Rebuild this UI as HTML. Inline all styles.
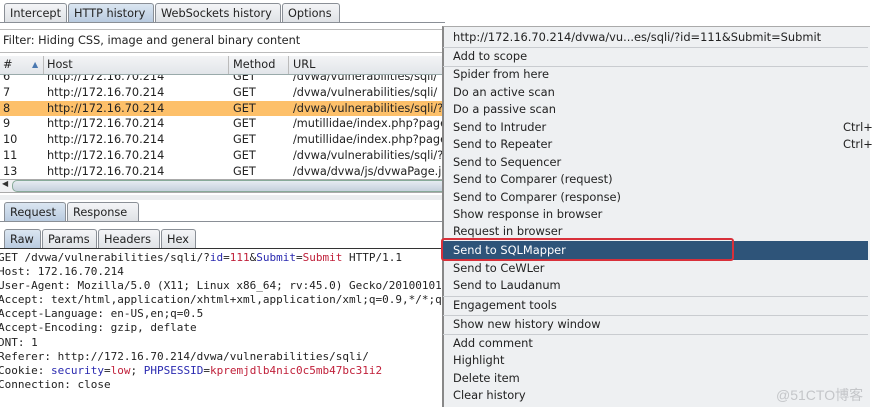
<!DOCTYPE html><html><head><style>
body{margin:0;width:873px;height:409px;background:#fff;position:relative;overflow:hidden;font-family:"DejaVu Sans","Liberation Sans",sans-serif;font-size:11.3px;color:#222}
.a{position:absolute;white-space:nowrap}
.tab{position:absolute;white-space:nowrap;height:19px;border:1px solid #8a8f96;border-bottom:none;background:linear-gradient(#f4f5f7,#dfe2e6);line-height:19px;padding:0 5px;box-sizing:border-box;border-radius:3px 3px 0 0;overflow:hidden}
.sel{background:linear-gradient(#dbe6f1,#b9cbe0)}
.mono{font-family:"DejaVu Sans Mono","Liberation Mono",monospace;font-size:11px;line-height:14.1px}
.b{color:#2a2ab0}.r{color:#c0203a}
.m{position:absolute;left:453px;font-size:11.4px;color:#222;white-space:nowrap}
.sep{position:absolute;left:443px;width:425px;height:1px;background:#c9ccd0}
</style></head><body>
<div class="a" style="left:0;top:22px;width:445px;height:1px;background:#8a8f96"></div>
<div class="tab" style="left:4px;top:3px;width:63px">Intercept</div>
<div class="tab sel" style="left:68px;top:3px;width:86px">HTTP history</div>
<div class="tab" style="left:155px;top:3px;width:126px">WebSockets history</div>
<div class="tab" style="left:282px;top:3px;width:58px">Options</div>
<div class="a" style="left:0;top:29px;width:445px;height:22px;border-top:1px solid #bbb;border-bottom:1px solid #bbb;background:#fff;line-height:22px;padding-left:3px">Filter: Hiding CSS, image and general binary content</div>
<div class="a" style="left:0;top:56px;width:442px;height:18px;background:linear-gradient(#f3f4f6,#e2e5e9);border-bottom:1px solid #9aa;line-height:18px"></div>
<div class="a" style="left:3px;top:56px;line-height:18px">#</div>
<div class="a" style="left:32px;top:56px;line-height:18px;color:#4a78b0;font-size:8px">▲</div>
<div class="a" style="left:43px;top:56px;width:1px;height:18px;background:#bbb"></div>
<div class="a" style="left:47px;top:56px;line-height:18px">Host</div>
<div class="a" style="left:228px;top:56px;width:1px;height:18px;background:#bbb"></div>
<div class="a" style="left:233px;top:56px;line-height:18px">Method</div>
<div class="a" style="left:288px;top:56px;width:1px;height:18px;background:#bbb"></div>
<div class="a" style="left:293px;top:56px;line-height:18px">URL</div>
<div class="a" style="left:0;top:101px;width:442px;height:15px;background:#fdc06a"></div>
<div style="position:absolute;left:0;top:75px;width:442px;height:104px;overflow:hidden">
<div style="position:absolute;top:-6px;left:0;line-height:15.8px">
<div class="a" style="left:3px;top:0">6<br>7<br>8<br>9<br>10<br>11<br>13</div>
<div class="a" style="left:47px;top:0">http://172.16.70.214<br>http://172.16.70.214<br>http://172.16.70.214<br>http://172.16.70.214<br>http://172.16.70.214<br>http://172.16.70.214<br>http://172.16.70.214</div>
<div class="a" style="left:233px;top:0">GET<br>GET<br>GET<br>GET<br>GET<br>GET<br>GET</div>
<div class="a" style="left:293px;top:0">/dvwa/vulnerabilities/sqli/<br>/dvwa/vulnerabilities/sqli/<br>/dvwa/vulnerabilities/sqli/?<br>/mutillidae/index.php?page<br>/mutillidae/index.php?page<br>/dvwa/vulnerabilities/sqli/?<br>/dvwa/dvwa/js/dvwaPage.j</div>
</div></div>
<div class="a" style="left:0;top:179px;width:442px;height:12px;background:#f0f1f3;border-top:1px solid #aaa;border-bottom:1px solid #aaa"></div>
<div class="a" style="left:12px;top:180px;width:430px;height:10px;background:linear-gradient(#e6ebf1,#c5d0dc);border-radius:5px 0 0 5px;border:1px solid #8a9"></div>
<div class="a" style="left:2px;top:179px;font-size:8px;color:#333">◀</div>
<div class="a" style="left:0;top:195px;width:442px;height:5px;background:#eceef0"></div>
<div class="a" style="left:0;top:221px;width:442px;height:1px;background:#8a8f96"></div>
<div class="tab sel" style="left:4px;top:202px;width:62px">Request</div>
<div class="tab" style="left:67px;top:202px;width:72px">Response</div>
<div class="a" style="left:0;top:248px;width:442px;height:1px;background:#333"></div>
<div class="tab sel" style="left:4px;top:229px;width:37px">Raw</div>
<div class="tab" style="left:42px;top:229px;width:55px">Params</div>
<div class="tab" style="left:98px;top:229px;width:62px">Headers</div>
<div class="tab" style="left:161px;top:229px;width:35px">Hex</div>
<div class="a mono" style="left:-2px;top:251px">GET /dvwa/vulnerabilities/sqli/?<span class="b">id</span>=<span class="r">111</span>&amp;<span class="b">Submit</span>=<span class="r">Submit</span> HTTP/1.1<br>Host: 172.16.70.214<br>User-Agent: Mozilla/5.0 (X11; Linux x86_64; rv:45.0) Gecko/20100101<br>Accept: text/html,application/xhtml+xml,application/xml;q=0.9,*/*;q<br>Accept-Language: en-US,en;q=0.5<br>Accept-Encoding: gzip, deflate<br>DNT: 1<br>Referer: http://172.16.70.214/dvwa/vulnerabilities/sqli/<br>Cookie: <span class="b">security</span>=<span class="r">low</span>; <span class="b">PHPSESSID</span>=<span class="r">kpremjdlb4nic0c5mb47bc31i2</span><br>Connection: close</div>
<div class="a" style="left:442px;top:26px;width:426px;height:380px;background:#eef0f2;border-left:2px solid #888;border-top:1px solid #aaa"></div>
<div class="m" style="top:30px">http://172.16.70.214/dvwa/vu...es/sqli/?id=111&amp;Submit=Submit</div>
<div class="sep" style="top:47px"></div>
<div class="m" style="top:49px">Add to scope</div>
<div class="sep" style="top:66px"></div>
<div class="m" style="top:67px">Spider from here</div>
<div class="m" style="top:85px">Do an active scan</div>
<div class="m" style="top:102px">Do a passive scan</div>
<div class="m" style="top:120px">Send to Intruder</div>
<div class="m" style="left:843px;top:120px">Ctrl+</div>
<div class="m" style="top:137px">Send to Repeater</div>
<div class="m" style="left:843px;top:137px">Ctrl+</div>
<div class="m" style="top:155px">Send to Sequencer</div>
<div class="m" style="top:172px">Send to Comparer (request)</div>
<div class="m" style="top:190px">Send to Comparer (response)</div>
<div class="m" style="top:207px">Show response in browser</div>
<div class="m" style="top:224px">Request in browser</div>
<div class="a" style="left:443px;top:241px;width:425px;height:19px;background:#2e5479"></div>
<div class="a" style="left:441px;top:238px;width:293px;height:23px;border:2px solid #d8303a;border-radius:3px;box-sizing:border-box"></div>
<div class="m" style="top:243px;color:#fff">Send to SQLMapper</div>
<div class="m" style="top:261px">Send to CeWLer</div>
<div class="m" style="top:278px">Send to Laudanum</div>
<div class="sep" style="top:296px"></div>
<div class="m" style="top:298px">Engagement tools</div>
<div class="sep" style="top:315px"></div>
<div class="m" style="top:317px">Show new history window</div>
<div class="sep" style="top:334px"></div>
<div class="m" style="top:336px">Add comment</div>
<div class="m" style="top:353px">Highlight</div>
<div class="m" style="top:371px">Delete item</div>
<div class="m" style="top:388px">Clear history</div>
<div class="a" style="left:776px;top:385px;font-size:14px;color:#c4c6c9;font-family:'Liberation Sans','Noto Sans CJK SC',sans-serif">@51CTO博客</div>
</body></html>
